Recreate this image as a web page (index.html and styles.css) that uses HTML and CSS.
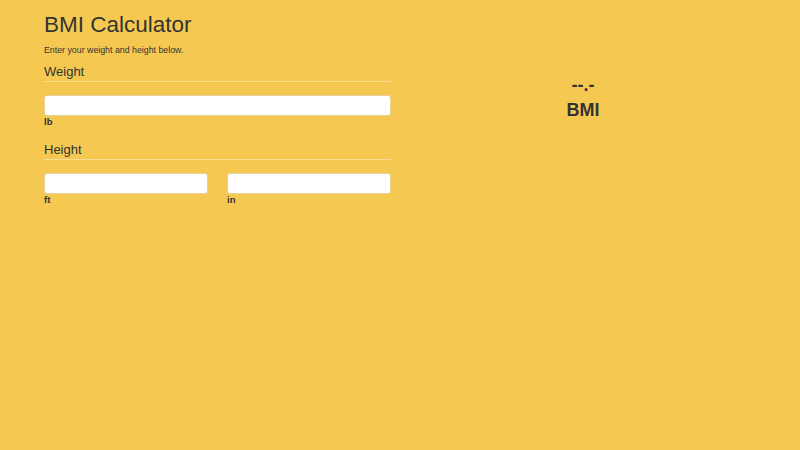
FILE: index.html
```html
<!DOCTYPE html>
<html>
<head>
<meta charset="utf-8">
<link rel="stylesheet" href="styles.css">
</head>
<body>
<div class="page">
  <div class="left">
    <h1 class="title">BMI Calculator</h1>
    <p class="intro">Enter your weight and height below.</p>
    <div class="section">
      <h2 class="section-title">Weight</h2>
      <div class="field">
        <input class="input" type="text">
        <label class="unit">lb</label>
      </div>
    </div>
    <div class="section">
      <h2 class="section-title">Height</h2>
      <div class="pair">
        <div class="field">
          <input class="input" type="text">
          <label class="unit">ft</label>
        </div>
        <div class="field">
          <input class="input" type="text">
          <label class="unit">in</label>
        </div>
      </div>
    </div>
  </div>
  <div class="right">
    <div class="value">--.-</div>
    <div class="label">BMI</div>
  </div>
</div>
</body>
</html>
```
FILE: styles.css
```css
html, body {
  margin: 0;
  padding: 0;
  background: #f5c951;
  height: 100%;
}
body {
  font-family: "Liberation Sans", Arial, sans-serif;
  color: #333;
}
.page {
  display: flex;
  gap: 19px;
  padding: 0 44px;
}
.left {
  width: 347px;
  flex: none;
}
.right {
  width: 346px;
  flex: none;
  text-align: center;
  padding-top: 74px;
}
.title {
  margin: 0;
  padding-top: 12px;
  font-size: 22.5px;
  font-weight: normal;
  line-height: 26px;
}
.intro {
  margin: 6px 0 0;
  font-size: 8.8px;
  line-height: 12px;
}
.section {
  margin-top: 8px;
}
.section + .section {
  margin-top: 14px;
}
.section-title {
  margin: 0;
  font-size: 13px;
  font-weight: normal;
  line-height: 16px;
  padding-bottom: 1px;
  border-bottom: 1px solid #f8dd8e;
}
.field {
  display: flex;
  flex-direction: column;
  padding-top: 13px;
}
.input {
  box-sizing: border-box;
  height: 21px;
  width: 100%;
  margin: 0;
  background: #fff;
  border: 1px solid #e6d39c;
  border-radius: 3px;
  padding: 2px 6px;
}
.unit {
  font-size: 9.5px;
  font-weight: bold;
  line-height: 12px;
}
.pair {
  display: flex;
  gap: 19px;
}
.pair .field {
  flex: 1;
}
.value {
  font-size: 18px;
  font-weight: bold;
  line-height: 22px;
}
.label {
  font-size: 18px;
  font-weight: bold;
  line-height: 28px;
}
```
